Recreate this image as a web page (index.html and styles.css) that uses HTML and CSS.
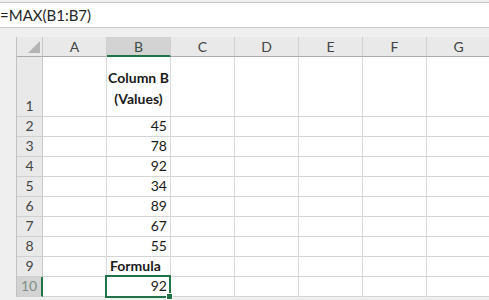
FILE: index.html
```html
<!DOCTYPE html>
<html lang="en">
<head>
  <meta charset="UTF-8">
  <title>MAX formula</title>
  <link rel="stylesheet" href="styles.css">
</head>
<body>
  <!-- formula bar -->
  <div class="formula-bar">=MAX(B1:B7)</div>

  <div class="sheet">
    <div class="grid">
      <!-- column headers -->
      <div class="corner"><span class="corner-tri"></span></div>
      <div class="col-head">A</div>
      <div class="col-head selected">B</div>
      <div class="col-head">C</div>
      <div class="col-head">D</div>
      <div class="col-head">E</div>
      <div class="col-head">F</div>
      <div class="col-head">G</div>

      <!-- row 1 -->
      <div class="row-head">1</div>
      <div class="cell"></div>
      <div class="cell bold center tall"><span>Column B<br>(Values)</span></div>
      <div class="cell"></div><div class="cell"></div><div class="cell"></div><div class="cell"></div><div class="cell"></div>

      <div class="row-head">2</div>
      <div class="cell"></div><div class="cell num">45</div>
      <div class="cell"></div><div class="cell"></div><div class="cell"></div><div class="cell"></div><div class="cell"></div>

      <div class="row-head">3</div>
      <div class="cell"></div><div class="cell num">78</div>
      <div class="cell"></div><div class="cell"></div><div class="cell"></div><div class="cell"></div><div class="cell"></div>

      <div class="row-head">4</div>
      <div class="cell"></div><div class="cell num">92</div>
      <div class="cell"></div><div class="cell"></div><div class="cell"></div><div class="cell"></div><div class="cell"></div>

      <div class="row-head">5</div>
      <div class="cell"></div><div class="cell num">34</div>
      <div class="cell"></div><div class="cell"></div><div class="cell"></div><div class="cell"></div><div class="cell"></div>

      <div class="row-head">6</div>
      <div class="cell"></div><div class="cell num">89</div>
      <div class="cell"></div><div class="cell"></div><div class="cell"></div><div class="cell"></div><div class="cell"></div>

      <div class="row-head">7</div>
      <div class="cell"></div><div class="cell num">67</div>
      <div class="cell"></div><div class="cell"></div><div class="cell"></div><div class="cell"></div><div class="cell"></div>

      <div class="row-head">8</div>
      <div class="cell"></div><div class="cell num">55</div>
      <div class="cell"></div><div class="cell"></div><div class="cell"></div><div class="cell"></div><div class="cell"></div>

      <div class="row-head">9</div>
      <div class="cell"></div><div class="cell bold">Formula</div>
      <div class="cell"></div><div class="cell"></div><div class="cell"></div><div class="cell"></div><div class="cell"></div>

      <div class="row-head selected">10</div>
      <div class="cell"></div><div class="cell num active">92</div>
      <div class="cell"></div><div class="cell"></div><div class="cell"></div><div class="cell"></div><div class="cell"></div>
    </div>
  </div>
</body>
</html>
```

FILE: styles.css
```css
/* spreadsheet look */
body {
  margin: 0;
  width: 489px;
  height: 300px;
  overflow: hidden;
  background-color: #efefef;
  font-family: 'Lato', 'Open Sans', sans-serif;
  color: #1a1a1a;
}

.formula-bar {
  margin-top: 2px;
  height: 24px;
  line-height: 25px;
  background: #ffffff;
  border-top: 1px solid #c8c8c8;
  border-bottom: 1px solid #c8c8c8;
  font-size: 15px;
  color: #262626;
}

.sheet {
  margin-top: 9px;
  margin-left: 16px;
  border-left: 1px solid #c2c2c2;
}

.grid {
  display: grid;
  grid-template-columns: 26px repeat(7, 64px);
  grid-template-rows: 20px 60px repeat(9, 20px);
}

.corner {
  position: relative;
  background: #e9e9e9;
  border-right: 1px solid #c8c8c8;
  border-bottom: 1px solid #ababab;
}

.corner-tri {
  position: absolute;
  right: 2px;
  bottom: 3px;
  width: 0;
  height: 0;
  border-left: 12px solid transparent;
  border-bottom: 12px solid #b4b4b4;
}

.col-head {
  background: #e9e9e9;
  border-right: 1px solid #d0d0d0;
  border-bottom: 1px solid #ababab;
  display: flex;
  align-items: center;
  justify-content: center;
  font-size: 14px;
  color: #444444;
}

.col-head.selected {
  background: #d3d3d3;
  border-bottom: 2px solid #217346;
  color: #3a4d42;
}

.row-head {
  background: #e9e9e9;
  border-right: 1px solid #c8c8c8;
  border-bottom: 1px solid #d0d0d0;
  display: flex;
  align-items: flex-end;
  justify-content: center;
  padding-bottom: 1px;
  font-size: 14px;
  line-height: 18px;
  color: #444444;
}

.row-head.selected {
  background: #d3d3d3;
  border-right: 2px solid #217346;
  color: #7d9186;
}

.cell {
  background: #ffffff;
  border-right: 1px solid #dadada;
  border-bottom: 1px solid #d4d4d4;
  display: flex;
  align-items: flex-end;
  padding: 0 3px 1px 3px;
  font-size: 14px;
  line-height: 18px;
  color: #1a1a1a;
  white-space: nowrap;
}

.cell.num {
  justify-content: flex-end;
}

.cell.bold {
  font-weight: 700;
}

.cell.center {
  justify-content: center;
  text-align: center;
}

.cell.tall {
  padding: 0 0 7px 0;
  line-height: 21px;
}

.cell.active {
  position: relative;
}

.cell.active::after {
  content: '';
  position: absolute;
  left: -2px;
  top: -2px;
  right: -1px;
  bottom: -2px;
  border: 2px solid #217346;
}

.cell.active::before {
  content: '';
  position: absolute;
  right: -3px;
  bottom: -4px;
  width: 5px;
  height: 5px;
  background: #217346;
  border: 1px solid #ffffff;
  z-index: 1;
}
```
